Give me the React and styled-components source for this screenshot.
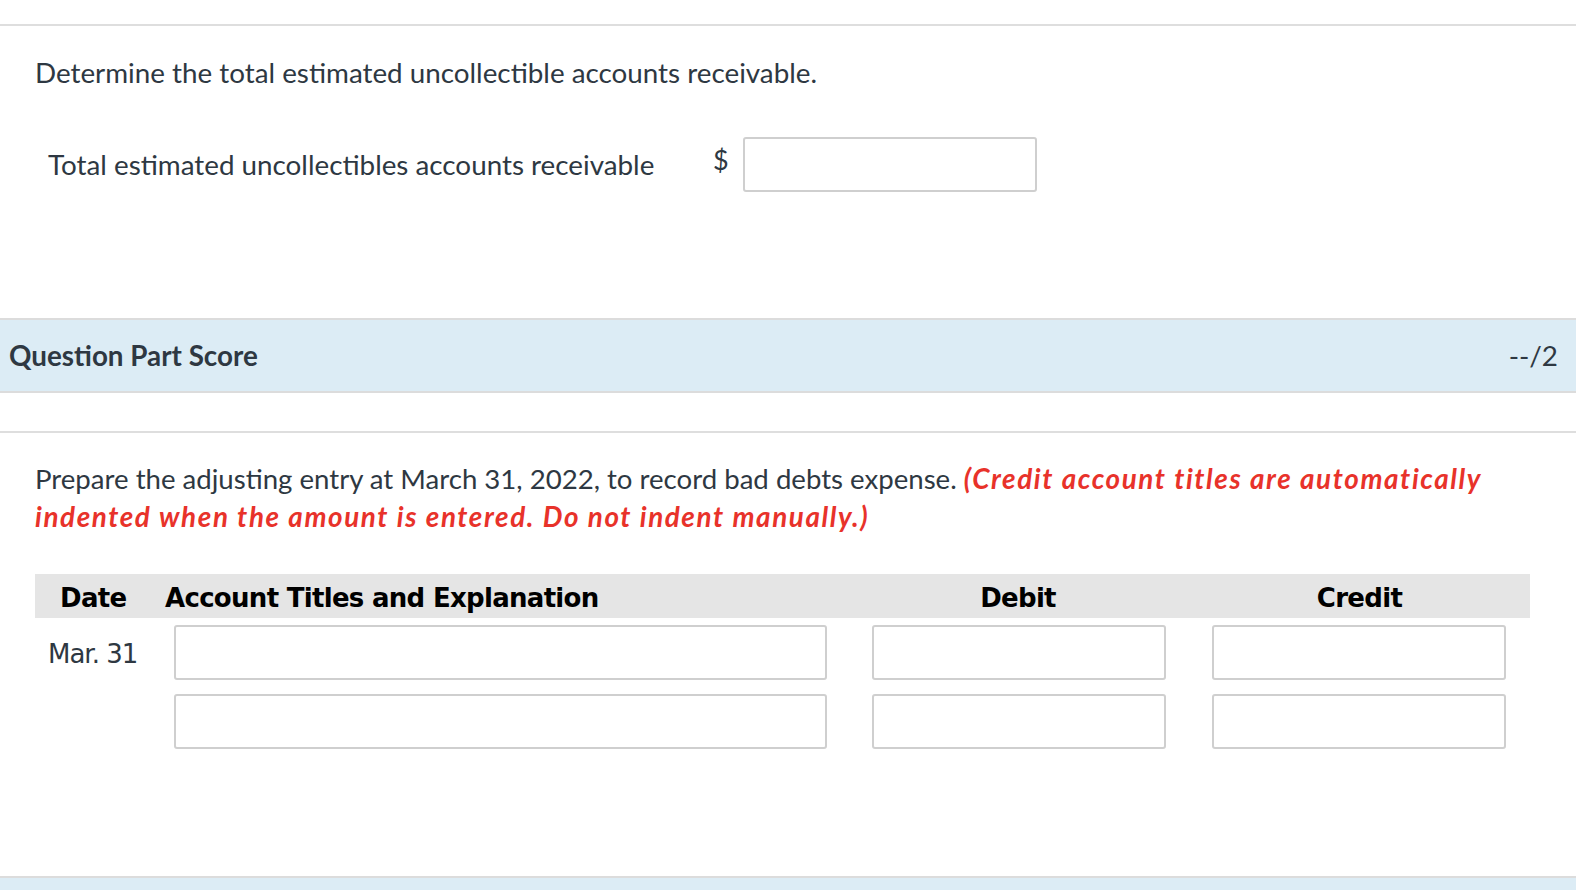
import React from "react";
import styled, { createGlobalStyle } from "styled-components";

const Global = createGlobalStyle`
  html, body { margin: 0; padding: 0; background: #fff; }
  body { font-family: Lato, "Open Sans", sans-serif; color: #2e3842; }
  * { box-sizing: border-box; }
`;

const Page = styled.div`
  width: 1576px;
  height: 890px;
  overflow: hidden;
  padding-top: 24px;
`;

const Rule = styled.div`
  border-top: 2px solid #dedede;
`;

const Section = styled.section`
  padding: ${(p) => p.$pad};
`;

const Spacer = styled.div`
  height: ${(p) => p.$h}px;
`;

const Prompt = styled.p`
  margin: 0;
  font-size: ${(p) => p.$size || 27.8}px;
  line-height: 38px;
  padding-left: 35px;
  padding-right: 60px;
`;

const Note = styled.span`
  color: #e8322a;
  font-weight: 700;
  font-style: italic;
  letter-spacing: 1.6px;
  font-size: 27.8px;
`;

const FieldRow = styled.div`
  display: flex;
  align-items: center;
  margin-top: 45px;
  padding-left: 48px;
`;

const FieldLabel = styled.span`
  font-size: 27.8px;
  width: 665px;
`;

const Dollar = styled.span`
  font-size: 27px;
  width: 30px;
  margin-top: -10px;
`;

const Input = styled.div`
  flex: none;
  width: ${(p) => p.$w}px;
  height: 55px;
  border: 2px solid #cfcfcf;
  border-radius: 3px;
  background: #fff;
`;

const ScoreBand = styled.div`
  display: flex;
  justify-content: space-between;
  align-items: center;
  height: 75px;
  background: #dcecf5;
  border-top: 2px solid #dcdcdc;
  border-bottom: 2px solid #dcdcdc;
  padding: 0 18px 0 9px;
  font-size: 27.8px;
`;

const ScoreTitle = styled.span`
  font-weight: 700;
`;

const Table = styled.div`
  margin: 38px 0 0 35px;
  width: 1495px;
`;

const HeadRow = styled.div`
  display: grid;
  grid-template-columns: 130px 696px 342px 1fr;
  align-items: center;
  height: 44px;
  padding-top: 3px;
  background: #e5e5e5;
  font-family: "DejaVu Sans", Verdana, sans-serif;
  font-weight: 700;
  font-size: 26px;
  letter-spacing: -0.7px;
  color: #000;
`;

const HeadCell = styled.div`
  text-align: ${(p) => p.$align || "left"};
  padding-left: ${(p) => p.$pl || 0}px;
  padding-right: ${(p) => p.$pr || 0}px;
`;

const EntryRow = styled.div`
  display: flex;
  align-items: center;
  margin-top: ${(p) => p.$mt}px;
`;

const DateCell = styled.div`
  flex: none;
  width: 139px;
  padding-left: 13px;
  padding-top: 3px;
  font-family: "DejaVu Sans", Verdana, sans-serif;
  font-size: 26px;
  letter-spacing: -1px;
  color: #2e3842;
`;

const Gap = styled.div`
  width: ${(p) => p.$w}px;
  flex: none;
`;

const BottomBand = styled.div`
  margin-top: 127px;
  border-top: 2px solid #dcdcdc;
  height: 20px;
  background: #dcecf5;
`;

function EntryLine({ date, mt }) {
  return (
    <EntryRow $mt={mt}>
      <DateCell>{date}</DateCell>
      <Input $w={653} />
      <Gap $w={45} />
      <Input $w={294} />
      <Gap $w={46} />
      <Input $w={294} />
    </EntryRow>
  );
}

export default function App() {
  return (
    <Page>
      <Global />
      <Rule />
      <Section $pad="28px 0 0 0">
        <Prompt>Determine the total estimated uncollectible accounts receivable.</Prompt>
        <FieldRow>
          <FieldLabel>Total estimated uncollectibles accounts receivable</FieldLabel>
          <Dollar>$</Dollar>
          <Input $w={294} />
        </FieldRow>
      </Section>
      <Spacer $h={126} />
      <ScoreBand>
        <ScoreTitle>Question Part Score</ScoreTitle>
        <span>--/2</span>
      </ScoreBand>
      <Spacer $h={38} />
      <Rule />
      <Section $pad="27px 0 0 0">
        <Prompt $size={27.6}>
          Prepare the adjusting entry at March 31, 2022, to record bad debts expense.{" "}
          <Note>(Credit account titles are automatically indented when the amount is entered. Do not indent manually.)</Note>
        </Prompt>
        <Table>
          <HeadRow>
            <HeadCell $pl={25}>Date</HeadCell>
            <HeadCell>Account Titles and Explanation</HeadCell>
            <HeadCell $align="center" $pr={28}>Debit</HeadCell>
            <HeadCell $align="center" $pr={14}>Credit</HeadCell>
          </HeadRow>
          <EntryLine date="Mar. 31" mt={7} />
          <EntryLine date="" mt={14} />
        </Table>
      </Section>
      <BottomBand />
    </Page>
  );
}
